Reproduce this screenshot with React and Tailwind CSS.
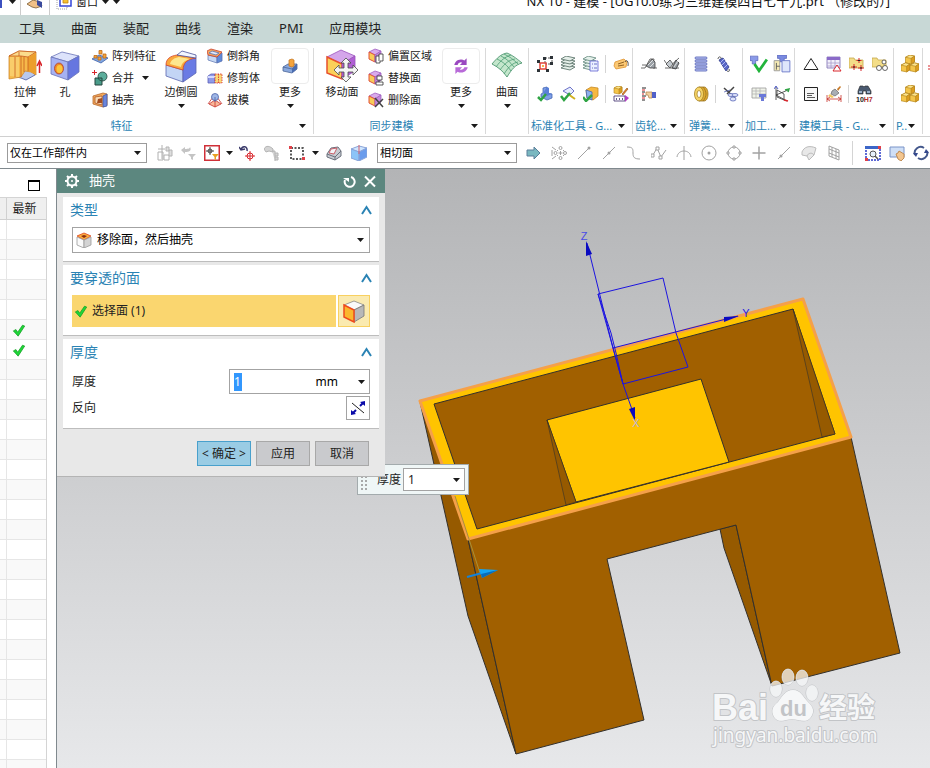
import React, { useState } from "react";

/* ---------- icons ---------- */

const Svg = ({ s = 16, box = 16, line = 0.8, children }) => (
  <svg
    width={s}
    height={s}
    viewBox={`0 0 ${box} ${box}`}
    fill="none"
    strokeWidth={line}
    className="shrink-0"
    aria-hidden="true"
  >
    {children}
  </svg>
);

const Caret = () => (
  <svg width="7" height="4" viewBox="0 0 7 4" className="shrink-0" aria-hidden="true">
    <path d="M0 0h7L3.5 4z" fill="#1a1a1a" />
  </svg>
);

const Check = () => (
  <Svg s={14}>
    <path d="M1.500 9 4.500 7.500l2 3L12 2.500l2.500 1L7 15z" fill="#1fd63a" stroke="#0f9a1c" />
  </Svg>
);

const icons = {
  extrude: (
    <Svg s={34} box={34}>
      <path d="M1 26l8-5 17 1 1 4-9 5-5-2z" fill="#b9c8ee" stroke="#4a58a0" />
      <path d="M1 7 11 2l17 1v23l-5-3-6-1-4 6-12 2z" fill="#f6b94a" stroke="#d08a30" />
      <path d="M1 7 11 2l17 1-8 5-7-1z" fill="#fbdc8c" stroke="#c85a20" />
      <path d="M2 8l9 0v20l-9-1z" fill="#f9cd6a" />
      <path d="M20 8l8-4v21l-8-3z" fill="#ec9e2c" />
      <path d="M13 7v21M20 8v14M11 3v4M7 8v20M16 8v15" stroke="#c85a20" />
      <path d="M31.500 24V13M29 17l2.500-5 2.500 5" stroke="#d8262c" strokeWidth="1.500" />
    </Svg>
  ),
  hole: (
    <Svg s={32} box={32}>
      <path d="M2 7 13 2l17 4-11 6z" fill="#dde3fb" stroke="#6a74b8" />
      <path d="M2 7l17 5v18L2 24z" fill="#a6b2f2" stroke="#6a74b8" />
      <path d="M30 6v16l-11 8V12z" fill="#6676e0" stroke="#6a74b8" />
      <ellipse cx="10" cy="18.500" rx="4.500" ry="5.500" fill="#f08a24" stroke="#a83c34" />
      <ellipse cx="10.500" cy="19" rx="3" ry="4" fill="#fbc63c" />
    </Svg>
  ),
  blend: (
    <Svg s={34} box={34}>
      <path d="M2 16v11l17 6V21z" fill="#c3d5f5" stroke="#5a66b0" />
      <path d="M19 33V21c0-7 4-11 13-12v15z" fill="#6a7be4" stroke="#5a66b0" />
      <path d="M2 16c0-6 4-9 11-10l19 3c-9 1-13 5-13 12z" fill="#f9a83c" stroke="#d8442c" />
      <path d="M6 15c1-4 4-6 9-7l11 2c-6 2-8 4-9 8z" fill="#fde78e" />
      <path d="M13 6l5-4 14 4v3z" fill="#f2f6ff" stroke="#4a5298" />
    </Svg>
  ),
  pattern: (
    <Svg>
      <path d="M0 11l7-4 9 3-7 5z" fill="#7fa5e0" stroke="#3f62a8" />
      <path d="M2 10V7.500h3V10zM7 6V2.500h3V6zM6 12V9h3v3zM11 10V6h3v4z" fill="#f5a53a" stroke="#c06a14" />
    </Svg>
  ),
  unite: (
    <Svg>
      <path d="M0 2.500h5M2.500 0v5" stroke="#d8262c" strokeWidth="1" />
      <circle cx="10.500" cy="6.500" r="4.500" fill="#5cae9c" stroke="#24443e" />
      <path d="M3 8h7v7H3z" fill="#4a9c8a" stroke="#24443e" strokeWidth="1" />
      <path d="M6 8a4.500 4.500 0 0 0 4 3" stroke="#24443e" />
    </Svg>
  ),
  shell: (
    <Svg>
      <path d="M1 4l10-3 4 1v11l-4 2L1 12z" fill="#f2a858" stroke="#b66a30" />
      <path d="M3 5l7-1v9l-7-2z" fill="#f9dcb4" stroke="#b05828" />
      <path d="M11 4l4-2v12l-4 1z" fill="#6a86dc" stroke="#4558a4" />
      <path d="M6 7l4-1v5l-5 0z" fill="#a44c20" />
    </Svg>
  ),
  chamfer: (
    <Svg>
      <path d="M1 7v5l9 3V9z" fill="#c6d8f4" stroke="#6a80b8" />
      <path d="M10 9l5-4v8l-5 2z" fill="#5f8ad8" stroke="#5870b0" />
      <path d="M0 3l4-2 11 3-5 5L1 7z" fill="#f6a860" stroke="#c8402c" />
      <path d="M5 3l7 2-3 2-7-2z" fill="#dfe9fb" stroke="#5870b0" />
    </Svg>
  ),
  trim: (
    <Svg>
      <path d="M1 6l3-2h4v9H1z" fill="#8f9ae8" stroke="#5a60b8" />
      <path d="M1 6h7v2H1z" fill="#d4daff" />
      <path d="M8 4h7v9H8z" fill="#f8d878" stroke="#d8262c" strokeDasharray="1.500 1" />
      <path d="M11.500 4v9" stroke="#d8262c" strokeDasharray="1.500 1" />
    </Svg>
  ),
  draft: (
    <Svg>
      <path d="M2 12l6-4 6 4-6 3z" fill="#f8b89a" stroke="#c8322c" />
      <path d="M6 5 1 12M10 5l5 7M8 7v8" stroke="#c8322c" />
      <circle cx="8" cy="5" r="3.500" fill="#9fb6e6" stroke="#4a62a8" />
      <path d="M8 5v5" stroke="#4a62a8" />
    </Svg>
  ),
  moreFeature: (
    <Svg>
      <path d="M1 9l5-3h9v5l-5 4-9-2z" fill="#8aa8dc" stroke="#4a6498" />
      <path d="M1 9l9 2 5-5" stroke="#4a6498" />
      <path d="M10 11v4l5-4V6z" fill="#4a6cb0" />
      <path d="M7 2l3-1 2 1v6l-2 1-3-1z" fill="#f6a43c" stroke="#c87a24" />
    </Svg>
  ),
  moveFace: (
    <Svg s={34} box={34}>
      <path d="M2 8 16 1l14 6-13 8z" fill="#d4a6ea" stroke="#9a52bc" />
      <path d="M2 8l15 7v15L2 24z" fill="#fad05a" stroke="#e8502c" strokeWidth="1.500" />
      <path d="M30 7v15l-13 8V15z" fill="#b060d4" stroke="#9a52bc" />
      <path
        d="M21 9l5 5h-3v5h5v-3l5 5-5 5v-3h-5v5h3l-5 5-5-5h3v-5h-5v3l-5-5 5-5v3h5v-5h-3z"
        fill="#f4f4f4"
        stroke="#4a4a4a"
      />
    </Svg>
  ),
  moreSync: (
    <Svg s={18} box={16}>
      <path d="M2 7a6 6 0 0 1 9-4l2-2v6H7l2-2a3 3 0 0 0-4 2z" fill="#9a48c0" />
      <path d="M14 9a6 6 0 0 1-9 4l-2 2V9h6l-2 2a3 3 0 0 0 4-2z" fill="#b86ad8" />
    </Svg>
  ),
  surface: (
    <Svg s={32} box={32}>
      <path d="M1 14C6 8 10 4 16 3c5 2 9 5 15 10-7 2-10 6-15 14C12 21 7 17 1 14z" fill="#c4e6cc" stroke="#3f8d65" />
      <path
        d="M5 17c5-7 9-10 15-12M9 20c5-7 9-10 15-11M13 24c5-8 9-11 14-12M6 9c6 3 10 6 14 12M10 6c6 3 9 6 13 11M13 4c6 3 9 5 14 10"
        stroke="#4a9c72"
      />
    </Svg>
  ),
};

const faceOp = (extra) => (
  <Svg>
    <path d="M1 4l6-3 6 2-6 4z" fill="#d9abec" stroke="#a060c0" />
    <path d="M1 4l6 3v7l-6-3z" fill="#f8cc58" stroke="#e0503c" strokeWidth="1" />
    <path d="M13 3v7l-6 4V7z" fill="#c48adc" stroke="#a060c0" />
    {extra}
  </Svg>
);

const box3 = (x, y) => (
  <g key={`${x}-${y}`} stroke="#b5851c" strokeWidth=".6">
    <path d={`M${x} ${y + 2}l4-2 4 1v5l-3 2-5-1z`} fill="#f4c54a" />
    <path d={`M${x} ${y + 2}l5 1 3-2-4-1z`} fill="#fbe48e" />
    <path d={`M${x + 5} ${y + 3}v5l3-2V${y + 1}z`} fill="#dc9e20" />
  </g>
);

const boxes = (
  <Svg s={18}>
    {box3(4, 0)}
    {box3(0, 7)}
    {box3(8, 7)}
  </Svg>
);

const tool = {
  assembly: (
    <Svg>
      <path d="M8 2h7v6H8z" stroke="#333" strokeDasharray="2 1" />
      <path d="M3 7h6v6H3z" fill="#fff" stroke="#e0443c" strokeWidth="1.500" />
      <path d="M0 4h3v3H0zM0 13h3v3H0zM9 13h3v3H9zM13 0h3v3h-3zM13 6h3v3h-3zM6 1h3v3H6z" fill="#2d3338" />
      <path d="M5 9h2v2H5z" fill="#f7b24a" />
    </Svg>
  ),
  layers: (
    <Svg>
      {[11, 8, 5, 2].map((y) => (
        <path key={y} d={`M1 ${y + 1}l5-3 9 2-5 3z`} fill="#e4eee8" stroke="#4f6a60" />
      ))}
    </Svg>
  ),
  layerList: (
    <Svg>
      {[11, 8, 5, 2].map((y) => (
        <path key={y} d={`M0 ${y + 1}l5-3 8 2-5 3z`} fill="#e4f0ea" stroke="#5e8478" />
      ))}
      <path d="M7 5h8v10H7z" fill="#eaf0ff" stroke="#6060d0" />
      <path d="M9 8h1M11 8h3M9 12h1M11 12h3" stroke="#4a50b8" />
    </Svg>
  ),
  tag: (
    <Svg>
      <path d="M2 6l9-3 3 3-1 5-10 2-2-3z" fill="#fbc873" stroke="#e09430" />
      <path d="M5 8l6-2M5 10l6-1" stroke="#7a4a10" />
      <path d="M12 6c1-3 4-1 3 4" stroke="#333" />
    </Svg>
  ),
  partCheck: (
    <Svg>
      <path d="M6 2l4-1v6l5 1v4l-5 2-6-3V8l2-1z" fill="#7f9fe6" stroke="#4467b4" />
      <path d="M10 1l2 1v5l3 1-5 2-4-3z" fill="#5a80d8" />
      <path d="M1 11l3 3 5-6" stroke="#2fa444" strokeWidth="2.500" />
    </Svg>
  ),
  axisCheck: (
    <Svg>
      <path d="M3 5l7-4 4 4-4 4z" fill="#e6ecff" stroke="#4a50b8" />
      <path d="M8 8l7 5" stroke="#d0b020" strokeWidth="2" />
      <path d="M1 10l3 4 6-7" stroke="#2fa444" strokeWidth="2.500" />
    </Svg>
  ),
  cubeCheck: (
    <Svg>
      <path d="M3 4l5-3 7 1v8l-5 4-6-2z" fill="#f6b840" stroke="#c88a24" />
      <path d="M3 4l6 2v8l-5-2z" fill="#8fb0ee" stroke="#4467b4" />
      <path d="M0 11l3 4 6-6" stroke="#2fa444" strokeWidth="2.500" />
    </Svg>
  ),
  rename: (
    <Svg>
      {box3(1, 0)}
      <path d="M9 8l5-6 1 1-5 6z" fill="#e88a2a" stroke="#8a4a10" strokeWidth=".6" />
      <path d="M1 10h11v5H1z" fill="#fff" stroke="#3a2a6a" />
      <path d="M3 13h1M6 13h1M9 13h1" stroke="#3a2a6a" strokeWidth="1.500" />
      <path d="M12 9l4 3-4 4z" fill="#b43cc0" />
    </Svg>
  ),
  gearA: (
    <Svg>
      <path d="M0 12h4L9 3h4l-1 9h4M1 9h4" stroke="#4a4a4a" />
      <path d="M5 10l6-7 3 3v6h-5z" fill="#9aa0a6" stroke="#444" />
      <path d="M7 9l5-5M9 11l4-4" stroke="#f4f4f4" />
    </Svg>
  ),
  gearB: (
    <Svg>
      <path d="M0 4l5 7 10-9M1 12h14" stroke="#444" />
      <path d="M2 8l4-4 3 4-3 4z" fill="#c4cacf" stroke="#444" />
      <path d="M8 12l4-8 3 3-3 6z" fill="#969ca2" stroke="#333" />
      <path d="M10 11l4-6" stroke="#eee" />
    </Svg>
  ),
  hand: (
    <Svg>
      <path d="M1 2h4M1 6h3M1 10h4M1 14h3" stroke="#222" strokeWidth="1" />
      <path d="M1 4h3M1 8h2M1 12h3" stroke="#d8262c" strokeWidth="1" />
      <path d="M5 6h6v6H8L7 9H5z" fill="#f0cfa0" stroke="#b88c58" />
      <path d="M11 6h4v6h-4z" fill="#5060c8" />
    </Svg>
  ),
  springA: (
    <Svg>
      {[2, 5, 8, 11, 14].map((y) => (
        <rect key={y} x="2" y={y - 1} width="12" height="2" rx="1" fill="#c4ccf8" stroke="#4a58b0" />
      ))}
    </Svg>
  ),
  springB: (
    <Svg>
      <path d="M2 3c0-3 4-3 3 1M13 13c1 2 0 3-2 2" stroke="#333" />
      <path d="M3 4l4-2 6 9-3 4z" fill="#5a68c8" stroke="#2c3888" />
      <path d="M4 7l4-4M6 9l4-4M8 12l4-4" stroke="#c8d0ff" />
    </Svg>
  ),
  coil: (
    <Svg>
      <path d="M6 1h5c3 0 4 4 4 7s-1 7-4 7H6z" fill="#dca830" stroke="#9a7420" />
      <path d="M10 1c2 2 3 5 3 7s-1 5-3 7" stroke="#9a7420" />
      <ellipse cx="6" cy="8" rx="4.500" ry="7" fill="#f6d468" stroke="#a48020" />
      <ellipse cx="6" cy="8" rx="2" ry="3.500" fill="#fff" stroke="#a48020" />
    </Svg>
  ),
  springCut: (
    <Svg>
      <path d="M1 2l11 10M11 1 4 8" stroke="#444" strokeWidth="1.500" />
      <path d="M1 6l6-2" stroke="#5a68b8" />
      <ellipse cx="8" cy="9" rx="3" ry="1.500" fill="#dfe4fb" stroke="#5a68b8" />
      <ellipse cx="12" cy="9" rx="3" ry="1.500" fill="#dfe4fb" stroke="#5a68b8" />
      <ellipse cx="10" cy="13" rx="3" ry="2" fill="#dfe4fb" stroke="#5a68b8" />
    </Svg>
  ),
  millCheck: (
    <Svg s={18}>
      <path d="M0 1h7v4H5v3H2V5H0z" fill="#8a9ae8" stroke="#5460b8" strokeWidth=".6" />
      <path d="M4 8l4 6 7-10" stroke="#22b43c" strokeWidth="2.500" />
    </Svg>
  ),
  millCopy: (
    <Svg s={18}>
      <path d="M4 0h8v3h-2v3H6V3H4z" fill="#7a8ae0" stroke="#5460b8" strokeWidth=".6" />
      <path d="M1 5h5v9H1z" fill="#f5eab4" stroke="#999" />
      <path d="M8 5h7v10H8z" fill="#dfe6fb" stroke="#6a78c8" />
      <path d="M3 7v6M3 10h3" stroke="#5a5a5a" />
    </Svg>
  ),
  millTable: (
    <Svg>
      <path d="M1 2h14v10H1z" fill="#f0f3ea" stroke="#9a9a9a" />
      <path d="M1 5h14M1 8h14M5 2v10M9 2v10" stroke="#b4b4b4" />
      <path d="M8 8h7v3h-2v4h-3v-4H8z" fill="#6a78d8" />
    </Svg>
  ),
  csys: (
    <Svg>
      <path d="M2 1v13M2 9l12-5M2 9l11 6" stroke="#333" />
      <path d="M3 4l7 4v6l-7-3z" stroke="#333" />
      <path d="M11 4l4-1-1 3" stroke="#2fa444" strokeWidth="1.500" />
      <path d="M10 14l4 1" stroke="#d8262c" strokeWidth="1.500" />
      <path d="M0 3l2-3 2 3" stroke="#2a3ac0" />
    </Svg>
  ),
  triangle: (
    <Svg line={1}>
      <path d="M8 2.500l7 11H1z" stroke="#222" />
    </Svg>
  ),
  tableTri: (
    <Svg>
      <path d="M1 1h13v11H1z" fill="#f2f0fb" stroke="#7a6ab0" />
      <path d="M1 1h13v3H1z" fill="#8a6ac8" />
      <path d="M1 7h13M1 10h13M5 4v8M9 4v8" stroke="#a89ccc" />
      <path d="M11 9l4 6H7z" fill="#fff" stroke="#d8262c" strokeWidth="1" />
    </Svg>
  ),
  folderPts: (
    <Svg>
      <path d="M0 2h5l1 2h8v8H0z" fill="#f3dd88" stroke="#c4a84c" />
      <path d="M10 2v5M7.500 4.500h5M5 8v6M2 11h6M12 9v6M9 12h6" stroke="#d8262c" strokeWidth="1" />
      <path d="M9 4h2v1H9zM4 10.500h2v1H4zM11 11.500h2v1h-2z" fill="#222" />
    </Svg>
  ),
  folderCir: (
    <Svg>
      <path d="M0 2h5l1 2h8v7H0z" fill="#f3dd88" stroke="#c4a84c" />
      <circle cx="12" cy="6" r="2" fill="#fff" stroke="#444" />
      <circle cx="7" cy="12" r="2.500" fill="#fff" stroke="#444" />
      <circle cx="13" cy="12" r="2.500" fill="#fff" stroke="#444" />
    </Svg>
  ),
  note: (
    <Svg>
      <path d="M1.500 1.500h13v13h-13z" fill="#f6f6f6" stroke="#222" strokeWidth="1" />
      <path d="M4 7.500h7M4 9.500h5M4 11.500h8" stroke="#333" />
    </Svg>
  ),
  brushDim: (
    <Svg>
      <path d="M11 3l3-3 1 1-3 4z" fill="#c87a28" />
      <path d="M6 5l3-2 4 4-4 3-4-2z" fill="#a8aeb4" stroke="#666" strokeWidth=".7" />
      <path d="M4 8l4 3-2 1-4-2z" fill="#f0c860" />
      <path d="M1 9v7M15 9v7M1 13h14M4 11l-3 2 3 2M12 11l3 2-3 2" stroke="#c8322c" />
    </Svg>
  ),
  fit: (
    <svg width="18" height="18" viewBox="0 0 18 18" aria-hidden="true">
      <path d="M5 1h3l1 1 1-1h3l3 5v3h-5V6H8v3H3V6z" fill="#4a5a70" stroke="#222" strokeWidth=".6" />
      <path d="M4 6h3v2H4zM12 6h3v2h-3z" fill="#9ab0c8" />
      <text x="1" y="17" fontSize="7" fontWeight="700" fill="#222" fontFamily="Liberation Sans, sans-serif">
        10<tspan fill="#b0302c">H7</tspan>
      </text>
    </svg>
  ),
};

/* ---------- ribbon ---------- */

const BigButton = ({ icon, label, caret, width, framed }) => (
  <button className={`flex flex-col items-center ${width}`}>
    <span
      className={`flex h-9 items-center justify-center ${
        framed ? "w-[38px] rounded border border-[#ececec]" : ""
      }`}
    >
      {icon}
    </span>
    <span className="h-4 leading-4 whitespace-nowrap">{label}</span>
    <span className="flex h-3 items-center">{caret && <Caret />}</span>
  </button>
);

const SmallButton = ({ icon, label, caret }) => (
  <button className="flex h-[22px] items-center gap-1 whitespace-nowrap">
    {icon}
    {label}
    {caret && (
      <span className="ml-1">
        <Caret />
      </span>
    )}
  </button>
);

const Group = ({ label, width, labelClass = "", children }) => (
  <section className={`flex shrink-0 flex-col border-r border-[#d9d9d9] ${width}`}>
    <div className="flex-1">{children}</div>
    <div className="flex h-4 items-center pr-[7px] pl-0.5 text-[#2a83b4]">
      <span className={`min-w-0 flex-1 whitespace-nowrap ${labelClass}`}>{label}</span>
      {label && <Caret />}
    </div>
  </section>
);

// "|" in a row stands for a divider
const IconRows = ({ rows }) => (
  <div className="flex flex-col gap-2 pt-[5px] pl-1">
    {rows.map((row, r) => (
      <div key={r} className="flex h-[22px] items-center">
        {row.map(([name, icon], i) =>
          name === "|" ? (
            <span key={i} className="mx-[3px] h-[18px] w-px bg-[#d4d4d4]" />
          ) : (
            <button key={i} aria-label={name} className="flex w-[23px] justify-center">
              {icon}
            </button>
          )
        )}
      </div>
    ))}
  </div>
);

const tabs = ["工具", "曲面", "装配", "曲线", "渲染", "PMI", "应用模块"];

const Ribbon = () => (
  <div className="flex h-[94px] shrink-0 overflow-hidden border-b border-[#d0d0d0] pt-[5px] pb-0.5 text-[11px] text-[#222]">
    <Group label="特征" width="w-[314px]" labelClass="pr-[58px] text-center">
      <div className="flex pl-1">
        <BigButton icon={icons.extrude} label="拉伸" caret width="w-[42px]" />
        <BigButton icon={icons.hole} label="孔" width="w-[38px]" />
        <div className="-mt-[3px] ml-2 w-[70px]">
          <SmallButton icon={icons.pattern} label="阵列特征" />
          <SmallButton icon={icons.unite} label="合并" caret />
          <SmallButton icon={icons.shell} label="抽壳" />
        </div>
        <BigButton icon={icons.blend} label="边倒圆" caret width="w-[38px]" />
        <div className="-mt-[3px] ml-[7px] w-[60px]">
          <SmallButton icon={icons.chamfer} label="倒斜角" />
          <SmallButton icon={icons.trim} label="修剪体" />
          <SmallButton icon={icons.draft} label="拔模" />
        </div>
        <BigButton icon={icons.moreFeature} label="更多" caret framed width="w-[46px]" />
      </div>
    </Group>
    <Group label="同步建模" width="w-[172px]" labelClass="pr-1 text-center">
      <div className="flex pl-2">
        <BigButton icon={icons.moveFace} label="移动面" width="w-10" />
        <div className="-mt-[3px] ml-1.5 w-[70px]">
          <SmallButton
            label="偏置区域"
            icon={faceOp(<path d="M8 8h3V6h4v7h-3v2H8zM11 8v5" fill="#fff" stroke="#333" />)}
          />
          <SmallButton
            label="替换面"
            icon={faceOp(
              <path d="M9 6h5v4H9zM8 12h7v3H8zM11 12v-2" fill="#fff" stroke="#333" />
            )}
          />
          <SmallButton
            label="删除面"
            icon={faceOp(<path d="M7 6l8 9M15 7l-8 8" stroke="#444" strokeWidth="1.500" />)}
          />
        </div>
        <BigButton icon={icons.moreSync} label="更多" caret framed width="w-[46px]" />
      </div>
    </Group>
    <Group width="w-[43px]">
      <BigButton icon={icons.surface} label="曲面" caret width="w-full" />
    </Group>
    <Group label="标准化工具 - G..." width="w-[104px]">
      <IconRows
        rows={[
          [["装配", tool.assembly], ["图层", tool.layers], ["图层列表", tool.layerList], ["|"], ["标签", tool.tag]],
          [["部件检查", tool.partCheck], ["坐标检查", tool.axisCheck], ["模型检查", tool.cubeCheck], ["|"], ["重命名", tool.rename]],
        ]}
      />
    </Group>
    <Group label="齿轮..." width="w-[52px]">
      <IconRows
        rows={[
          [["圆柱齿轮", tool.gearA], ["锥齿轮", tool.gearB]],
          [["齿轮出图", tool.hand]],
        ]}
      />
    </Group>
    <Group label="弹簧..." width="w-[58px]" labelClass="pl-0.5">
      <IconRows
        rows={[
          [["压缩弹簧", tool.springA], ["拉伸弹簧", tool.springB]],
          [["碟簧", tool.coil], ["|"], ["删除弹簧", tool.springCut]],
        ]}
      />
    </Group>
    <Group label="加工..." width="w-[52px]">
      <IconRows
        rows={[
          [["加工检查", tool.millCheck], ["加工复制", tool.millCopy]],
          [["加工表", tool.millTable], ["坐标系", tool.csys]],
        ]}
      />
    </Group>
    <Group label="建模工具 - G..." width="w-[99px]" labelClass="pl-0.5">
      <IconRows
        rows={[
          [["三角形", tool.triangle], ["表格", tool.tableTri], ["点集", tool.folderPts], ["圆集", tool.folderCir]],
          [["注释", tool.note], ["尺寸刷", tool.brushDim], ["|"], ["配合", tool.fit]],
        ]}
      />
    </Group>
    <Group label="P.." width="w-[29px]">
      <IconRows rows={[[["组件", boxes]], [["组件阵列", boxes]]]} />
    </Group>
    <svg width="7" height="24" viewBox="0 0 7 24" className="mt-1.5" aria-hidden="true">
      <path d="M5 12h2M5 15h2" stroke="#d8262c" />
    </svg>
  </div>
);

/* ---------- selection bar ---------- */

const G = "#a2a2a2";

const barLeft = [
  [
    "w-6",
    "装配选择",
    <>
      <path d="M5 0v14M1 4h7M1 7h5v8H1zM7 10h5v5H7z" stroke="#b0b0b0" />
      <path d="M9 2h3v4H9zM12 5h3v6h-3z" fill="#dedede" stroke="#b4b4b4" />
    </>,
  ],
  ["w-6", "筛选", <path d="M0 5l4-3v2c4 0 5-1 5-2 2 4-1 5-5 5v2zM7 9h8l-3 3v3l-2-1v-2z" fill="#c4c4c4" />],
  [
    "w-[22px]",
    "过滤器",
    <>
      <path d="M.75.75h14.500v14.500H.75z" stroke="#d03038" strokeWidth="1.500" />
      <circle cx="6" cy="6" r="2" stroke="#444" />
      <path d="M6 2v8M2 6h8" stroke="#444" />
      <path d="M8 9h7l-3 3v3l-1.500-1v-2z" fill="#e8a020" />
    </>,
  ],
  ["caret"],
  [
    "w-6",
    "重置",
    <>
      <path d="M2 5c1-5 7-4 6 1M0 2l2 3 4-1" stroke="#3a3a6a" strokeWidth="1.500" />
      <circle cx="11" cy="11" r="3" stroke="#d8262c" />
      <path d="M11 6v10M6 11h10" stroke="#d8262c" />
    </>,
  ],
  ["w-[26px]", "关联", <path d="M0 4c2-4 6-3 9 0v3L5 6 2 7zM8 6h3v10M11 8h3v3h-3M11 12h3v3h-3" fill="#d4d4d4" stroke="#b4b4b4" />],
  [
    "w-6",
    "框选",
    <>
      <path d="M2 3h12v11H2z" stroke="#222" strokeWidth="1.500" strokeDasharray="2 1.500" />
      <path d="M0 1h3v3H0zM13 12h3v3h-3z" fill="#e04048" />
    </>,
  ],
  ["caret"],
  [
    "w-[26px]",
    "高亮面",
    <>
      <path d="M1 9l4-6 7-1 3 4v5l-6 4-8-3z" fill="#c8ccd2" stroke="#6a707c" />
      <path d="M1 9l8 3 6-6M9 12v3" stroke="#6a707c" />
      <path d="M5 4l6-1-3 6-5-1z" fill="#f4f5f8" stroke="#c8606a" />
    </>,
  ],
  [
    "w-6",
    "实体面",
    <>
      <path d="M0 4l8-3 8 2-8 4z" fill="#cfe6ff" stroke="#8aa4d8" />
      <path d="M0 4l8 3v9l-8-3z" fill="#8cc4f8" stroke="#8aa4d8" />
      <path d="M16 3v9l-8 4V7z" fill="#6a9cec" stroke="#8aa4d8" />
      <path d="M8 0v9" stroke="#d8606a" />
    </>,
  ],
];

const barRight = [
  ["下一步", <path d="M1 5h7V2l6 6-6 6v-3H1z" fill="#7ab8c0" stroke="#5a7f9a" />],
  [
    "捕捉点",
    <>
      <path d="M1 2l4 3M1 14l4-3M1 5v6" stroke={G} />
      <circle cx="9.500" cy="3" r="1.500" stroke={G} />
      <circle cx="9.500" cy="13" r="1.500" stroke={G} />
      <circle cx="4.500" cy="8" r="1.500" stroke={G} />
      <circle cx="14" cy="8" r="1.500" stroke={G} />
      <path d="M9.500 6v4M7.500 8h4M6 5l1 1M13 5l-1 1M6 11l1-1M13 11l-1-1" stroke={G} />
    </>,
  ],
  ["端点", <><path d="M2 14 13 3" stroke={G} /><circle cx="13" cy="3" r="1.500" fill={G} /></>],
  ["中点", <><path d="M2 14 14 2" stroke={G} /><circle cx="8" cy="8" r="1.500" fill={G} /></>],
  ["控制点", <path d="M1 2c6 0 6 2 6 6s1 6 7 6" stroke={G} />],
  ["极点", <><path d="M2 10 6 3l4 9 5-7" stroke={G} /><path d="M0 9h3v3H0zM5 2h3v3H5zM8 11h3v3H8z" fill="#fff" stroke={G} /></>],
  ["交点", <path d="M1 12C2 4 14 4 15 12M8 1v14" stroke={G} />],
  ["圆心", <><circle cx="8" cy="8" r="7" stroke={G} /><circle cx="8" cy="8" r="1.500" fill={G} /></>],
  ["象限点", <><circle cx="8" cy="8" r="6" stroke={G} /><path d="M7 1h2v2H7zM7 13h2v2H7zM1 7h2v2H1zM13 7h2v2h-2z" fill="#fff" stroke={G} /></>],
  ["现有点", <path d="M8 1.500v13M1.500 8h13" stroke={G} strokeWidth="1.500" />],
  ["线上点", <><path d="M2 14 14 2" stroke={G} /><circle cx="5" cy="11" r="1.500" fill={G} /></>],
  ["面上点", <path d="M1 7c2-5 7-7 14-4l-2 7-5 5-2-4-5-1zM6 11c1-3 5-4 7-1" fill="#e8e8e8" stroke="#bcbcbc" />],
  ["网格点", <path d="M3 1l10 4v10L3 11zM3 4l10 4M3 8l10 4M6 2v10M10 4v10" stroke={G} />],
];

const barEnd = [
  [
    "缩放",
    <>
      <path d="M1 3h14v12H1z" stroke="#2a3ac8" strokeWidth="1.500" strokeDasharray="2 1" />
      <path d="M0 1h13v3H0z" fill="#3c66c8" />
      <circle cx="8" cy="9" r="3" fill="#e6f0fb" stroke="#555" />
      <path d="M10 11l3 3" stroke="#555" strokeWidth="1.500" />
      <path d="M13 1h3v3h-3zM0 13h3v3H0z" fill="#e04048" />
    </>,
  ],
  [
    "平移",
    <>
      <path d="M1 2h14v10H1z" fill="#cfdff6" stroke="#7a94c8" />
      <path d="M7 9l2-1 1-2 5 3v4l-3 3-3-2z" fill="#f3c690" stroke="#c08c54" />
    </>,
  ],
  [
    "旋转",
    <>
      <path d="M2 10a6 6 0 0 1 9-7M14 6a6 6 0 0 1-9 7" stroke="#44588c" strokeWidth="2" />
      <path d="M0 8h5l-2 4zM16 8h-5l2-4z" fill="#34488c" />
    </>,
  ],
];

const BarButton = ({ width, name, children }) => (
  <button aria-label={name} className={`flex shrink-0 justify-center ${width}`}>
    <Svg line={1}>{children}</Svg>
  </button>
);

const Picker = ({ label, options, className = "" }) => (
  <span className={`relative flex h-5 w-[140px] shrink-0 items-center ${className}`}>
    <select
      aria-label={label}
      className="h-full w-full appearance-none border border-[#9b9b9b] bg-white pl-0.5 text-[11px] text-black"
    >
      {options.map((o) => (
        <option key={o}>{o}</option>
      ))}
    </select>
    <span className="pointer-events-none absolute right-1.5">
      <Caret />
    </span>
  </span>
);

const SelectionBar = () => (
  <div className="flex h-[31px] shrink-0 items-center overflow-hidden pt-px pl-[7px]">
    <Picker label="选择范围" options={["仅在工作部件内", "整个装配"]} className="mr-1.5" />
    {barLeft.map(([width, name, art], i) =>
      width === "caret" ? (
        <span key={i} className="flex w-3 shrink-0 justify-center">
          <Caret />
        </span>
      ) : (
        <BarButton key={i} width={width} name={name}>
          {art}
        </BarButton>
      )
    )}
    <Picker label="面规则" options={["相切面", "单个面"]} className="mr-1 ml-1.5" />
    {barRight.map(([name, art]) => (
      <BarButton key={name} width="w-[25px]" name={name}>
        {art}
      </BarButton>
    ))}
    <span className="mr-2 ml-1.5 h-6 w-px shrink-0 bg-[#d4d4d4]" />
    {barEnd.map(([name, art]) => (
      <BarButton key={name} width="w-6" name={name}>
        {art}
      </BarButton>
    ))}
  </div>
);

/* ---------- left history panel ---------- */

const rows = Array.from({ length: 28 }, (_, i) => ({ id: i, done: i === 5 || i === 6 }));

const HistoryPanel = () => (
  <aside className="flex w-[57px] shrink-0 flex-col overflow-hidden border-r border-[#80898e] bg-white">
    <div className="flex h-7 shrink-0 items-center justify-end pt-1 pr-4">
      <button aria-label="还原窗口" className="h-[11px] w-3 border border-t-2 border-black" />
    </div>
    <table className="w-[47px] table-fixed border-separate border-spacing-0 border-t border-r border-[#d4d4d4] text-xs text-[#222]">
      <thead>
        <tr className="h-[22px] bg-[#efefef]">
          <th className="w-[7px] border-r border-b border-[#d0d0d0] p-0" />
          <th className="border-b border-[#d0d0d0] p-0 pr-1 font-normal">最新</th>
        </tr>
      </thead>
      <tbody>
        {rows.map((r) => (
          <tr key={r.id} className="h-5 odd:bg-white even:bg-[#f9f9f9]">
            <td className="border-r border-b border-[#e6e6e6] p-0" />
            <td className="border-b border-[#e6e6e6] p-0 pl-[5px]">{r.done && <Check />}</td>
          </tr>
        ))}
      </tbody>
    </table>
  </aside>
);

/* ---------- dialog ---------- */

const Section = ({ title, children }) => (
  <section className="border-b border-[#bdbdbd] bg-white px-[9px] pb-2">
    <h2 className="-mx-0.5 mb-1 flex h-[26px] items-center justify-between text-sm text-[#2a83b4]">
      {title}
      <button aria-label={`折叠${title}`}>
        <svg width="12" height="10" viewBox="0 0 12 10" fill="none">
          <path d="M2 9l4.500-7L11 9" stroke="#2a83b4" strokeWidth="2" />
        </svg>
      </button>
    </h2>
    {children}
  </section>
);

const ShellDialog = ({ thickness, setThickness }) => (
  <div
    role="dialog"
    aria-label="抽壳"
    className="absolute top-0 left-0 z-20 w-[328px] border-b border-[#b4b4b4] bg-[#e8e8e8] text-xs text-[#222]"
  >
    <header className="flex h-6 items-center bg-[#5c877f] px-2 text-[13px] text-white">
      <svg width="14" height="14" viewBox="0 0 14 14" fill="none" aria-hidden="true">
        <circle cx="7" cy="7" r="4.500" stroke="#fff" strokeWidth="2" />
        <circle cx="7" cy="7" r="1" fill="#fff" />
        <path
          d="M7 0v2M7 12v2M0 7h2M12 7h2M2 2l1.500 1.500M10.500 10.500 12 12M12 2l-1.500 1.500M3.500 10.500 2 12"
          stroke="#fff"
          strokeWidth="2"
        />
      </svg>
      <h1 className="ml-2.5 flex-1">抽壳</h1>
      <button aria-label="重置" className="mr-2">
        <svg width="13" height="13" viewBox="0 0 13 13" fill="none">
          <path d="M2 5a5 5 0 1 0 6-3" stroke="#fff" strokeWidth="2" />
          <path d="M0 3h6v4z" fill="#fff" />
        </svg>
      </button>
      <button aria-label="关闭">
        <svg width="13" height="13" viewBox="0 0 13 13">
          <path d="M1 1.500l10 10M11 1.500l-10 10" stroke="#fff" strokeWidth="2" />
        </svg>
      </button>
    </header>

    <div className="flex flex-col gap-[3px] px-1.5 pt-1">
      <Section title="类型">
        <div className="relative flex h-[26px] items-center">
          <select
            aria-label="类型"
            className="h-full w-full appearance-none border border-[#a3a3a3] bg-white pl-6 text-black"
          >
            <option>移除面，然后抽壳</option>
            <option>对所有面抽壳</option>
          </select>
          <span className="pointer-events-none absolute left-1">
            <Svg>
              <path d="M1 4l7-3 7 3-7 4z" fill="#fbb040" stroke="#e0441c" />
              <path d="M5 4l3-1 3 1-3 2z" fill="#8a2c10" />
              <path d="M1 5l7 3v8l-7-3z" fill="#fafafa" stroke="#999" />
              <path d="M15 5v8l-7 3V8z" fill="#d4d4d4" stroke="#999" />
            </Svg>
          </span>
          <span className="pointer-events-none absolute right-1.5">
            <Caret />
          </span>
        </div>
      </Section>

      <Section title="要穿透的面">
        <div className="flex h-8 gap-0.5">
          <button className="flex flex-1 items-center gap-1 bg-[#fad66f] pl-0.5">
            <Check />
            选择面 (1)
          </button>
          <button
            aria-label="面"
            className="flex w-8 items-center justify-center border border-[#f8d060] bg-[#faeab0]"
          >
            <Svg s={24} box={24}>
              <path d="M2 6l10-4 10 4-10 5z" fill="#fafafa" stroke="#888" />
              <path d="M22 6v11l-10 6V11z" fill="#b8b8b8" stroke="#777" />
              <path d="M2 6l10 5v12L2 18z" fill="#fbb62c" stroke="#f0491c" strokeWidth="1.500" />
            </Svg>
          </button>
        </div>
      </Section>

      <Section title="厚度">
        <div className="flex h-[25px] items-center justify-between">
          <label htmlFor="thickness">厚度</label>
          <div className="flex h-full w-[141px] items-center border border-[#a3a3a3] bg-white pr-1">
            <input
              id="thickness"
              value={thickness}
              onChange={(e) => setThickness(e.target.value)}
              className="ml-1 h-[18px] w-2 bg-[#3297fd] text-white outline-none"
            />
            <span className="flex-1" />
            <span className="mr-5 text-black">mm</span>
            <Caret />
          </div>
        </div>
        <div className="mt-0.5 flex h-6 items-center justify-between">
          <label htmlFor="reverse">反向</label>
          <button
            id="reverse"
            className="flex h-6 w-6 items-center justify-center border border-[#a3a3a3] bg-white"
          >
            <Svg>
              <path d="M2 3l12 10" stroke="#222" strokeWidth="1" />
              <path d="M3 13l3-3M10 6l3-3" stroke="#0a0aa8" strokeWidth="2" />
              <path d="M15 1v5l-5-4zM1 15v-5l5 4z" fill="#0a0aa8" />
            </Svg>
          </button>
        </div>
      </Section>
    </div>

    <footer className="flex justify-end gap-[5px] px-4 pt-3 pb-2.5">
      <button className="h-[25px] w-[54px] border border-[#48a0cc] bg-[#9acce4] whitespace-nowrap">
        &lt; 确定 &gt;
      </button>
      <button className="h-[25px] w-[54px] border border-[#a8a8a8] bg-[#c9cacd]">应用</button>
      <button className="h-[25px] w-[54px] border border-[#a8a8a8] bg-[#c9cacd]">取消</button>
    </footer>
  </div>
);

/* ---------- graphics window ---------- */

const Model = () => (
  <svg
    viewBox="57 169 873 599"
    className="absolute inset-0 h-full w-full"
    role="img"
    aria-label="模型"
    strokeLinejoin="round"
  >
    {/* body */}
    <g stroke="#33302c" strokeWidth="1">
      <path d="M420 402l22 98 26 116 48 138-48-215z" fill="#965a00" />
      <path d="M720 529l16-4 36 161-48-138z" fill="#965a00" />
      <path d="M468 539l383-102 49 216-128 33-36-161-129 34 37 161-128 34z" fill="#a16000" />
    </g>
    {/* rim and inside */}
    <path d="M420 401l383-102 48 138-383 102z" fill="#ffc400" stroke="#f5a04a" strokeWidth="3" />
    <g stroke="#33302c" strokeWidth="1">
      <path d="M434 404l359-95 42 125-358 95z" fill="#a16000" />
      <path d="M793 309l42 125-13 3z" fill="#965a00" strokeWidth=".6" />
      <path d="M547 420l154-41 28 83-153 40z" fill="#ffc400" />
      <path d="M547 420l29 82-10 3z" fill="#965a00" strokeWidth=".6" />
    </g>
    <path d="M455 496l25 77" stroke="#a8903a" />
    {/* direction handle */}
    <path d="M467 577l15-4" stroke="#1583d8" strokeWidth="2" />
    <path d="M479 569l19 1-16 8z" fill="#14a5f5" />
    <path d="M481 574l17-4-16 8z" fill="#0a6cb8" />
    {/* datum csys */}
    <g fill="none" stroke="#1c14e0" strokeWidth="1">
      <path d="M587 243l26 105 125-32M613 348l10 36 12 34" />
      <path d="M598 294l65-16 13 55 12 34-65 17-25-90 13 39 5 20 7 31" />
    </g>
    <g fill="#0a0ac0">
      <path d="M586 241l6 13-6 2z" />
      <path d="M739 316l-15 1v5z" />
      <path d="M635 421l-6-12 6-2z" />
    </g>
    <g fontFamily="Liberation Sans, sans-serif" fontSize="11" textAnchor="middle">
      <text x="584" y="240" fill="#4a4ae6">Z</text>
      <text x="746" y="317" fill="#2a20e0">Y</text>
      <text x="636" y="427" fill="#b8b4d8">X</text>
    </g>
    {/* site mark */}
    <g fill="#f6f7f8" stroke="#c2c4c7" strokeWidth="2" paintOrder="stroke">
      <text x="712" y="720" fontSize="36" fontWeight="700" fontFamily="Liberation Sans, sans-serif">
        Bai
      </text>
      <g fillOpacity=".75" stroke="#c2c4c7" strokeWidth="1">
        <ellipse cx="776" cy="689" rx="6" ry="8" />
        <ellipse cx="788" cy="677" rx="6" ry="8" />
        <ellipse cx="802" cy="678" rx="6" ry="8" />
        <ellipse cx="812" cy="693" rx="6" ry="8" />
      </g>
      <path
        d="M793 690c-8 0-11 7-15 12-6 5-7 9-4 15 3 5 9 4 12 3 4-1 8-1 12 0 4 1 10 2 13-3 4-6 2-10-3-15-5-5-7-12-15-12z"
        strokeWidth="1"
      />
      <text
        x="780"
        y="716"
        fontSize="22"
        fontWeight="700"
        fill="#c2c4c7"
        stroke="none"
        fontFamily="Liberation Sans, sans-serif"
      >
        du
      </text>
      <text x="819" y="718" fontSize="28" fontWeight="700" fontFamily="Noto Sans CJK SC, sans-serif">
        经验
      </text>
      <text x="713" y="742" fontSize="19" fontFamily="Noto Sans, sans-serif">
        jingyan.baidu.com
      </text>
    </g>
  </svg>
);

const Viewport = () => {
  const [thickness, setThickness] = useState("1");

  return (
    <main className="relative min-w-0 flex-1 overflow-hidden bg-linear-to-b from-[#b3b4b6] to-[#e7e8ea]">
      <Model />
      {/* on-screen input follows the dialog value */}
      <div className="absolute top-[295px] left-[300px] z-10 flex h-[31px] w-[112px] items-center border border-[#a3abad] bg-[#eff6f6] pr-[3px] pl-0.5 text-xs text-[#222]">
        <svg width="8" height="24" viewBox="0 0 8 24" className="mr-2" aria-hidden="true">
          {[9, 13, 17, 21].map((y) => (
            <path key={y} d={`M1 ${y}h2M5 ${y}h2`} stroke="#a8a8a8" strokeWidth="2" />
          ))}
        </svg>
        <label htmlFor="float-thickness" className="ml-auto shrink-0 whitespace-nowrap">
          厚度
        </label>
        <div className="ml-0.5 flex h-[23px] w-[62px] shrink-0 items-center border border-[#a3a3a3] bg-white pr-1 pl-1">
          <input
            id="float-thickness"
            value={thickness}
            onChange={(e) => setThickness(e.target.value)}
            className="w-full min-w-0 outline-none"
          />
          <Caret />
        </div>
      </div>
      <ShellDialog thickness={thickness} setThickness={setThickness} />
    </main>
  );
};

/* ---------- page ---------- */

const TitleBar = () => (
  <div className="flex h-[15px] shrink-0 items-end overflow-hidden text-[#111]">
    <div className="flex h-[26px] flex-1 items-center text-[11px]">
      <span className="h-3 w-0.5 bg-[#3c50c0]" />
      <span className="ml-[7px]">
        <Caret />
      </span>
      <span className="ml-1 h-full w-px bg-[#ccc]" />
      <button aria-label="触控模式" className="ml-1.5">
        <Svg>
          <path d="M0 10l6-4 7 2 2 4-6 2-4-1z" fill="#f0c088" stroke="#7a5a30" />
          <path d="M10 6l5 2v6l-5-3z" fill="#3a4a9c" />
        </Svg>
      </button>
      <span className="ml-1.5 h-full w-px bg-[#ccc]" />
      <button className="ml-1.5 flex items-center gap-1">
        <Svg>
          <path d="M1 3h10v12H1z" stroke="#888" strokeDasharray="1 1" />
          <path d="M4 1h11v11H4z" fill="#fff" stroke="#3444d8" strokeWidth="1.500" />
          <path d="M7 4h5v5H7z" fill="#f6c030" stroke="#c08010" />
        </Svg>
        窗口
        <Caret />
      </button>
      <span className="ml-1">
        <Caret />
      </span>
    </div>
    <div className="flex h-[26px] items-center pr-10 text-[13px] whitespace-nowrap">
      NX 10 - 建模 - [UG10.0练习三维建模四百七十九.prt （修改的）]
    </div>
  </div>
);

const App = () => (
  <div className="flex h-screen flex-col overflow-hidden bg-white font-['Noto_Sans','Noto_Sans_CJK_SC',sans-serif]">
    <TitleBar />
    <nav className="flex h-7 shrink-0 items-center gap-[26px] bg-[#c8d8d6] pl-[19px] text-[13px] text-[#222]">
      {tabs.map((t) => (
        <a key={t} href="#" className="whitespace-nowrap">
          {t}
        </a>
      ))}
    </nav>
    <Ribbon />
    <SelectionBar />
    <div className="flex min-h-0 flex-1 border-t border-[#80898e]">
      <HistoryPanel />
      <Viewport />
    </div>
  </div>
);

export default App;
